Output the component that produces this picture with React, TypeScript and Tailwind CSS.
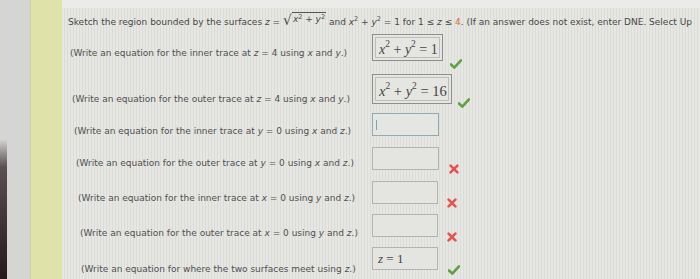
import React from "react";

type Mark = "ok" | "bad" | "none";

type Row = {
  label: React.ReactNode;
  answer?: React.ReactNode;
  mark: Mark;
  rowClass: string;
  labelClass: string;
  boxClass: string;
  markClass: string;
  focused?: boolean;
  filled?: boolean;
};

const I = ({ children }: { children: React.ReactNode }) => <i className="italic">{children}</i>;

function Check() {
  return (
    <svg width="12" height="10" viewBox="0 0 12 10">
      <path d="M1 5.5 L4.3 8.6 L11 1.4" fill="none" stroke="#5fa043" strokeWidth="2.6" strokeLinecap="round" strokeLinejoin="round" />
    </svg>
  );
}

function Cross() {
  return (
    <svg width="10" height="10" viewBox="0 0 10 10">
      <path d="M1.6 1.6 L8.4 8.4 M8.4 1.6 L1.6 8.4" fill="none" stroke="#e5534f" strokeWidth="2.6" strokeLinecap="round" />
    </svg>
  );
}

const mathFont = "font-['Liberation_Serif',serif] text-[#444] whitespace-nowrap leading-none";

function Sq() {
  return <span className="text-[9.5px] relative top-[-7px]">2</span>;
}

const rows: Row[] = [
  {
    label: <>(Write an equation for the inner trace at <I>z</I> = 4 using <I>x</I> and <I>y</I>.)</>,
    answer: (
      <span className="text-[14px]">
        <I>x</I><Sq /> + <I>y</I><Sq /> = 1
      </span>
    ),
    mark: "ok",
    rowClass: "h-[27px] mt-[5px]",
    labelClass: "pl-[8px] pt-[13px]",
    boxClass: "w-[71px] h-[27px]",
    markClass: "mt-[25px] ml-[7px]",
    filled: true,
  },
  {
    label: <>(Write an equation for the outer trace at <I>z</I> = 4 using <I>x</I> and <I>y</I>.)</>,
    answer: (
      <span className="text-[14.5px]">
        <I>x</I><Sq /> + <I>y</I><Sq /> = 16
      </span>
    ),
    mark: "ok",
    rowClass: "h-[30px] mt-[13px]",
    labelClass: "pl-[10px] pt-[19px]",
    boxClass: "w-[80px] h-[30px]",
    markClass: "mt-[24px] ml-[6px]",
    filled: true,
  },
  {
    label: <>(Write an equation for the inner trace at <I>y</I> = 0 using <I>x</I> and <I>z</I>.)</>,
    mark: "none",
    rowClass: "h-[23px] mt-[9px]",
    labelClass: "pl-[12px] pt-[12px]",
    boxClass: "w-[67px] h-[23px]",
    markClass: "",
    focused: true,
  },
  {
    label: <>(Write an equation for the outer trace at <I>y</I> = 0 using <I>x</I> and <I>z</I>.)</>,
    mark: "bad",
    rowClass: "h-[23px] mt-[11px]",
    labelClass: "pl-[14px] pt-[10px]",
    boxClass: "w-[67px] h-[23px]",
    markClass: "mt-[17px] ml-[10px]",
  },
  {
    label: <>(Write an equation for the inner trace at <I>x</I> = 0 using <I>y</I> and <I>z</I>.)</>,
    mark: "bad",
    rowClass: "h-[23px] mt-[11px]",
    labelClass: "pl-[16px] pt-[11px]",
    boxClass: "w-[66px] h-[23px]",
    markClass: "mt-[17px] ml-[9px]",
  },
  {
    label: <>(Write an equation for the outer trace at <I>x</I> = 0 using <I>y</I> and <I>z</I>.)</>,
    mark: "bad",
    rowClass: "h-[23px] mt-[10px]",
    labelClass: "pl-[18px] pt-[13px]",
    boxClass: "w-[66px] h-[23px]",
    markClass: "mt-[18px] ml-[9px]",
  },
  {
    label: <>(Write an equation for where the two surfaces meet using <I>z</I>.)</>,
    answer: (
      <span className="text-[13px] pl-[5px]">
        <I>z</I> = 1
      </span>
    ),
    mark: "ok",
    rowClass: "h-[23px] mt-[10px]",
    labelClass: "pl-[19px] pt-[16px]",
    boxClass: "w-[66px] h-[23px]",
    markClass: "mt-[18px] ml-[10px]",
  },
];

export default function App() {
  return (
    <div className="w-[700px] h-[279px] overflow-hidden flex bg-[#e2e3df] font-['DejaVu_Sans',sans-serif] text-[#505050]">
      <div className="w-[30px] shrink-0 h-full flex bg-[#d5d5d3]">
        <div className="w-[7px] h-full bg-gradient-to-b from-[#d5d5d3] from-50% via-[#5a4f52] via-60% to-[#24191d]" />
      </div>
      <div className="w-[32px] shrink-0 h-full bg-[#dfe2a9] border-l border-[#cfd19a]" />
      <div className="flex-1 min-w-0 overflow-hidden flex flex-col bg-[repeating-linear-gradient(90deg,#e6e6e3_0px,#e6e6e3_2px,#dbdcd7_2px,#dbdcd7_3px)]">
        <div className="h-[8px] shrink-0 bg-[#ebebea]" />
        <div className="pl-[6px] mt-[4px] whitespace-nowrap text-[9px] text-[#484848]">
          Sketch the region bounded by the surfaces <I>z</I> ={" "}
          <span className="inline-flex items-end">
            <span className="text-[14px] leading-none">√</span>
            <span className="border-t border-[#555] px-[1px]">
              <I>x</I>
              <sup className="text-[6.5px]">2</sup> + <I>y</I>
              <sup className="text-[6.5px]">2</sup>
            </span>
          </span>{" "}
          and <I>x</I>
          <sup className="text-[6.5px]">2</sup> + <I>y</I>
          <sup className="text-[6.5px]">2</sup> = 1 for 1 ≤ <I>z</I> ≤ <span className="text-[#e2683c]">4</span>. (If an answer does not exist, enter DNE. Select Up
        </div>
        {rows.map((r, i) => (
          <div key={i} className={`flex items-start shrink-0 ${r.rowClass}`}>
            <div className={`w-[310px] shrink-0 h-full whitespace-nowrap text-[9px] leading-[12px] ${r.labelClass}`}>
              {r.label}
            </div>
            <div
              className={`${r.boxClass} shrink-0 flex items-center ${mathFont} ${
                r.focused
                  ? "border border-[#93a9b6] bg-[#e4e6e2]"
                  : r.filled
                  ? "border border-[#8e8e8c] p-[2px] bg-[#e5e5e2]"
                  : "border border-[#b3b3b0] bg-[#e4e4e1]"
              }`}
            >
              {r.filled ? (
                <div className="w-full h-full border border-[#bdbdba] flex items-center pl-[3px] pt-[4px]">{r.answer}</div>
              ) : r.focused ? (
                <div className="ml-[3px] w-[1px] h-[10px] bg-[#8aa0ad]" />
              ) : (
                r.answer
              )}
            </div>
            {r.mark !== "none" && <div className={r.markClass}>{r.mark === "ok" ? <Check /> : <Cross />}</div>}
          </div>
        ))}
      </div>
    </div>
  );
}
